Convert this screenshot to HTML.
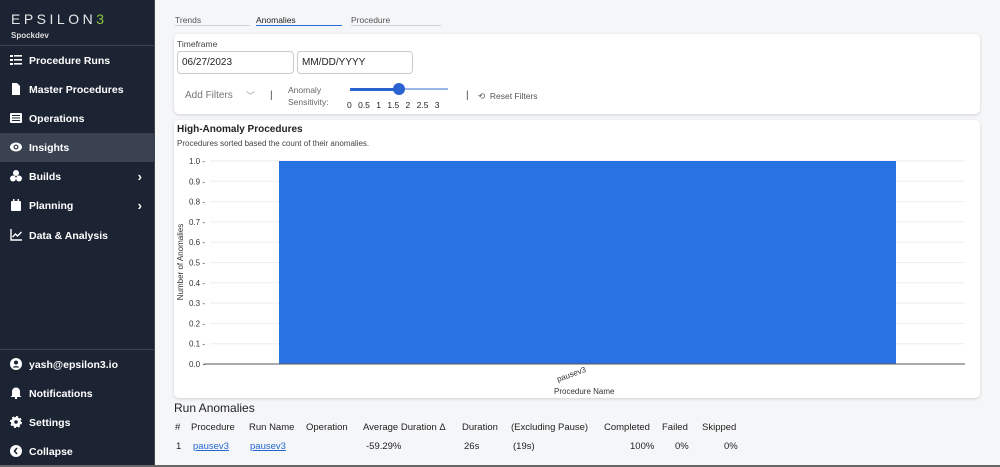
<!DOCTYPE html>
<html><head><meta charset="utf-8"><style>
*{box-sizing:border-box;margin:0;padding:0}
body{width:1000px;height:467px;overflow:hidden;font-family:"Liberation Sans",sans-serif;background:#f5f6f8;position:relative}
.sb{position:absolute;left:0;top:0;width:155px;height:467px;background:#1c2433;color:#fff;border-right:1px solid #444}
.logo{position:absolute;left:11px;top:11px;font-size:14px;letter-spacing:3.5px;color:#e8e8e8;font-weight:normal}
.logo b{color:#8dc63f;font-weight:normal}
.org{position:absolute;left:11px;top:31px;font-size:8px;font-weight:bold;color:#ddd}
.hr{position:absolute;left:0;width:155px;height:1px;background:#3a4354}
.it{position:absolute;left:0;width:155px;height:29px;font-size:10.5px;font-weight:bold;display:flex;align-items:center;padding-left:29px}
.it .ic{position:absolute;left:10px;top:8px;width:12px;height:12px}
.it .ch{position:absolute;right:13px;top:7px;font-size:13px}
.act{background:#3a4252}
.tab{position:absolute;top:15px;font-size:8.5px;color:#555;border-bottom:1px solid #cfd4dc;height:11px}
.card{position:absolute;left:174px;width:806px;background:#fff;border-radius:5px;box-shadow:0 1px 3px rgba(0,0,0,.15)}
.inp{position:absolute;top:17px;height:23px;border:1px solid #ccc;border-radius:4px;font-size:10px;padding:5px 4px;color:#222}
.t{position:absolute;font-size:8.5px;color:#444}
.th{position:absolute;top:422px;font-size:9.5px;color:#222}
.td{position:absolute;top:441px;font-size:9.5px;color:#222}
a{color:#2366d1;text-decoration:underline}
</style></head><body>
<div class="sb">
<div class="logo">EPSILON<b>3</b></div>
<div class="org">Spockdev</div>
<div class="hr" style="top:45px"></div>
<div class="it" style="top:46px"><svg class="ic" viewBox="0 0 12 12" fill="#fff"><rect x="0" y="1" width="3" height="2"/><rect x="0" y="5" width="3" height="2"/><rect x="0" y="9" width="3" height="2"/><rect x="4" y="1" width="8" height="1.6"/><rect x="4" y="5" width="8" height="1.6"/><rect x="4" y="9" width="8" height="1.6"/></svg>Procedure Runs</div>
<div class="it" style="top:75px"><svg class="ic" viewBox="0 0 12 12" fill="#fff"><path d="M2 0h5l3 3v9H2z"/></svg>Master Procedures</div>
<div class="it" style="top:104px"><svg class="ic" viewBox="0 0 12 12" fill="#fff"><rect x="0" y="1" width="12" height="10" rx="1"/><rect x="2" y="3" width="8" height="1" fill="#1c2433"/><rect x="2" y="5.5" width="8" height="1" fill="#1c2433"/><rect x="2" y="8" width="8" height="1" fill="#1c2433"/></svg>Operations</div>
<div class="it act" style="top:133px"><svg class="ic" viewBox="0 0 12 12"><ellipse cx="6" cy="6" rx="6" ry="4.5" fill="#fff"/><circle cx="6" cy="6" r="2.5" fill="#3a4252"/><circle cx="6" cy="6" r="1.2" fill="#fff"/></svg>Insights</div>
<div class="it" style="top:162px"><svg class="ic" viewBox="0 0 12 12" fill="#fff"><circle cx="6" cy="3" r="3"/><circle cx="3" cy="8.5" r="3"/><circle cx="9" cy="8.5" r="3"/></svg>Builds<span class="ch">›</span></div>
<div class="it" style="top:191px"><svg class="ic" viewBox="0 0 12 12" fill="#fff"><rect x="1" y="2" width="10" height="10" rx="1"/><rect x="3" y="0" width="1.5" height="3"/><rect x="7.5" y="0" width="1.5" height="3"/></svg>Planning<span class="ch">›</span></div>
<div class="it" style="top:221px"><svg class="ic" viewBox="0 0 12 12" fill="none" stroke="#fff" stroke-width="1.4"><path d="M1 0v11h11M2.5 8l3-3 2 2 4-4"/></svg>Data &amp; Analysis</div>
<div class="hr" style="top:349px"></div>
<div class="it" style="top:350px"><svg class="ic" viewBox="0 0 12 12"><circle cx="6" cy="6" r="6" fill="#fff"/><circle cx="6" cy="4.5" r="2" fill="#1c2433"/><path d="M2.5 9.5a4 3 0 0 1 7 0" fill="#1c2433"/></svg>yash@epsilon3.io</div>
<div class="it" style="top:379px"><svg class="ic" viewBox="0 0 12 12" fill="#fff"><path d="M6 0.5a4 4 0 0 1 4 4v4l1.5 1.5H.5L2 8.5v-4a4 4 0 0 1 4-4z"/><circle cx="6" cy="11" r="1.2"/></svg>Notifications</div>
<div class="it" style="top:408px"><svg class="ic" viewBox="0 0 12 12"><circle cx="6" cy="6" r="5" fill="#fff" stroke="#fff" stroke-width="2" stroke-dasharray="2 1.9"/><circle cx="6" cy="6" r="1.8" fill="#1c2433"/></svg>Settings</div>
<div class="it" style="top:437px"><svg class="ic" viewBox="0 0 12 12"><circle cx="6" cy="6" r="6" fill="#fff"/><path d="M7 3L4.5 6 7 9" stroke="#1c2433" stroke-width="1.6" fill="none"/></svg>Collapse</div>
</div>
<div class="tab" style="left:175px;width:75px">Trends</div>
<div class="tab" style="left:256px;width:86px;color:#222;border-bottom:1px solid #2a6ad9">Anomalies</div>
<div class="tab" style="left:351px;width:90px">Procedure</div>
<div class="card" style="top:34px;height:80px">
<div class="t" style="left:3px;top:5px">Timeframe</div>
<div class="inp" style="left:3px;width:117px">06/27/2023</div>
<div class="inp" style="left:123px;width:116px">MM/DD/YYYY</div>
<div class="t" style="left:11px;top:56px;font-size:10px;color:#777">Add Filters</div>
<div class="t" style="left:72px;top:55px;font-size:9px;color:#999">﹀</div>
<div class="t" style="left:96px;top:56px;font-size:10px">|</div>
<div class="t" style="left:114px;top:50px;color:#666;line-height:12px">Anomaly<br>Sensitivity:</div>
<div style="position:absolute;left:176px;top:54px;width:98px;height:2px;background:#9db8ea"></div>
<div style="position:absolute;left:176px;top:53.5px;width:50px;height:3px;background:#2a62d0"></div>
<div style="position:absolute;left:219px;top:49px;width:12px;height:12px;border-radius:50%;background:#2a62d0"></div>
<div class="t" style="left:173px;top:66px;color:#222;word-spacing:4px">0 0.5 1 1.5 2 2.5 3</div>
<div class="t" style="left:292px;top:56px;font-size:10px">|</div>
<div class="t" style="left:304px;top:57px;color:#555">⟲&nbsp; Reset Filters</div>
</div>
<div class="card" style="top:120px;height:278px">
<div style="position:absolute;left:3px;top:4px;font-size:10px;font-weight:bold;color:#222">High-Anomaly Procedures</div>
<div class="t" style="left:3px;top:19px;font-size:8px">Procedures sorted based the count of their anomalies.</div>
<svg width="806" height="278" style="position:absolute;left:0;top:0" font-family="Liberation Sans" font-size="8" fill="#333">
<g stroke="#eee">
<line x1="36" y1="41" x2="791" y2="41"/><line x1="36" y1="61.3" x2="791" y2="61.3"/><line x1="36" y1="81.6" x2="791" y2="81.6"/><line x1="36" y1="101.9" x2="791" y2="101.9"/><line x1="36" y1="122.2" x2="791" y2="122.2"/><line x1="36" y1="142.5" x2="791" y2="142.5"/><line x1="36" y1="162.8" x2="791" y2="162.8"/><line x1="36" y1="183.1" x2="791" y2="183.1"/><line x1="36" y1="203.4" x2="791" y2="203.4"/><line x1="36" y1="223.7" x2="791" y2="223.7"/></g>
<rect x="105" y="41" width="617" height="203" fill="#2872e3"/>
<line x1="30" y1="244" x2="791" y2="244" stroke="#555"/>
<g text-anchor="end"><text x="31" y="44">1.0 -</text><text x="31" y="64.3">0.9 -</text><text x="31" y="84.6">0.8 -</text><text x="31" y="104.9">0.7 -</text><text x="31" y="125.2">0.6 -</text><text x="31" y="145.5">0.5 -</text><text x="31" y="165.8">0.4 -</text><text x="31" y="186.1">0.3 -</text><text x="31" y="206.4">0.2 -</text><text x="31" y="226.7">0.1 -</text><text x="31" y="247">0.0 -</text></g>
<text transform="translate(9,142) rotate(-90)" text-anchor="middle">Number of Anomalies</text>
<text transform="translate(384,262) rotate(-20)">pausev3</text>
<text x="380" y="274">Procedure Name</text>
</svg>
</div>
<div style="position:absolute;left:174px;top:401px;font-size:12px;color:#222">Run Anomalies</div>
<div class="th" style="left:175px">#</div><div class="th" style="left:191px">Procedure</div><div class="th" style="left:249px">Run Name</div><div class="th" style="left:306px">Operation</div><div class="th" style="left:363px">Average Duration Δ</div><div class="th" style="left:462px">Duration</div><div class="th" style="left:511px">(Excluding Pause)</div><div class="th" style="left:604px">Completed</div><div class="th" style="left:662px">Failed</div><div class="th" style="left:702px">Skipped</div>
<div class="td" style="left:176px">1</div><div class="td" style="left:193px"><a>pausev3</a></div><div class="td" style="left:250px"><a>pausev3</a></div><div class="td" style="left:366px">-59.29%</div><div class="td" style="left:464px">26s</div><div class="td" style="left:513px">(19s)</div><div class="td" style="left:630px">100%</div><div class="td" style="left:675px">0%</div><div class="td" style="left:724px">0%</div>
<div style="position:absolute;left:0;top:465px;width:1000px;height:2px;background:#666"></div>
</body></html>
